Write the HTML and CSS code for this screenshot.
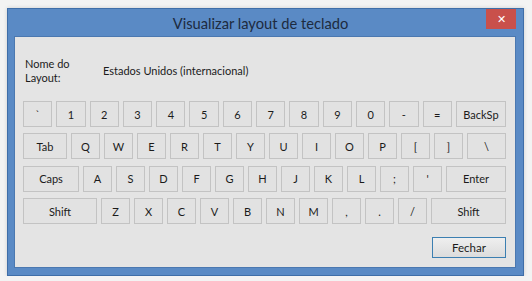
FILE: index.html
```html
<!DOCTYPE html>
<html lang="pt-BR">
<head>
  <meta charset="UTF-8" />
  <title>Visualizar layout de teclado</title>
  <link rel="stylesheet" href="styles.css">
</head>
<body>
  <div class="janela">
    <div class="titulo">
      <span class="titulo-texto">Visualizar layout de teclado</span>
      <span class="fechar-x">&#x2715;</span>
    </div>
    <div class="cliente">
      <div class="cabecalho">
        <div class="rotulo">Nome do<br>Layout:</div>
        <div class="valor">Estados Unidos (internacional)</div>
      </div>

      <div class="teclado">
        <div class="linha linha-num">
          <span class="tecla">`</span>
          <span class="tecla">1</span>
          <span class="tecla">2</span>
          <span class="tecla">3</span>
          <span class="tecla">4</span>
          <span class="tecla">5</span>
          <span class="tecla">6</span>
          <span class="tecla">7</span>
          <span class="tecla">8</span>
          <span class="tecla">9</span>
          <span class="tecla">0</span>
          <span class="tecla">-</span>
          <span class="tecla">=</span>
          <span class="tecla larga">BackSp</span>
        </div>
        <div class="linha">
          <span class="tecla tab">Tab</span>
          <span class="tecla">Q</span>
          <span class="tecla">W</span>
          <span class="tecla">E</span>
          <span class="tecla">R</span>
          <span class="tecla">T</span>
          <span class="tecla">Y</span>
          <span class="tecla">U</span>
          <span class="tecla">I</span>
          <span class="tecla">O</span>
          <span class="tecla">P</span>
          <span class="tecla">[</span>
          <span class="tecla">]</span>
          <span class="tecla larga">\</span>
        </div>
        <div class="linha">
          <span class="tecla caps">Caps</span>
          <span class="tecla">A</span>
          <span class="tecla">S</span>
          <span class="tecla">D</span>
          <span class="tecla">F</span>
          <span class="tecla">G</span>
          <span class="tecla">H</span>
          <span class="tecla">J</span>
          <span class="tecla">K</span>
          <span class="tecla">L</span>
          <span class="tecla">;</span>
          <span class="tecla">'</span>
          <span class="tecla larga">Enter</span>
        </div>
        <div class="linha">
          <span class="tecla shift">Shift</span>
          <span class="tecla">Z</span>
          <span class="tecla">X</span>
          <span class="tecla">C</span>
          <span class="tecla">V</span>
          <span class="tecla">B</span>
          <span class="tecla">N</span>
          <span class="tecla">M</span>
          <span class="tecla">,</span>
          <span class="tecla">.</span>
          <span class="tecla">/</span>
          <span class="tecla larga">Shift</span>
        </div>
      </div>

      <div class="rodape">
        <button type="button" class="botao">Fechar</button>
      </div>
    </div>
  </div>
</body>
</html>
```

FILE: styles.css
```css
body {
  margin: 0;
  padding: 8px 0 0 7px;
  background: #f3f3f3;
  font-family: Lato, "Noto Sans", sans-serif;
  font-size: 11px;
  color: #1b1b1b;
}
.janela {
  width: 515px;
  height: 266px;
  background: #5a8ac5;
  border: 1px solid #3f6ea8;
  display: flex;
  flex-direction: column;
  box-shadow: 0 0 4px rgba(0, 0, 0, 0.15);
}
.titulo {
  height: 29px;
  display: flex;
  align-items: center;
  justify-content: center;
  position: relative;
}
.titulo-texto {
  font-size: 14.7px;
  color: #1d2b40;
  margin-right: 10px;
}
.fechar-x {
  position: absolute;
  top: 0;
  right: 7px;
  width: 30px;
  height: 20px;
  background: #c9504b;
  color: #fff;
  font-size: 11px;
  display: flex;
  align-items: center;
  justify-content: center;
}
.cliente {
  margin: 0 7px 7px 6px;
  flex: 1;
  background: #e4e4e4;
  border: 1px solid #4b78b0;
  padding: 20px 9px 9px 8px;
  display: flex;
  flex-direction: column;
}
.cabecalho {
  display: flex;
  align-items: center;
  line-height: 13px;
}
.rotulo {
  width: 78px;
  padding-left: 2px;
  line-height: 13.5px;
}
.teclado {
  margin-top: 17px;
  display: flex;
  flex-direction: column;
  gap: 6.3px;
}
.linha {
  display: flex;
  gap: 4px;
}
.tecla {
  width: 29px;
  height: 26px;
  box-sizing: border-box;
  border: 1px solid #c3c3c3;
  background: #e2e2e2;
  display: flex;
  align-items: center;
  justify-content: center;
  font-size: 11px;
}
.linha-num .tecla {
  width: 29.3px;
}
.linha-num .larga,
.larga {
  flex: 1;
  width: auto;
}
.tab {
  width: 44px;
}
.caps {
  width: 56px;
}
.shift {
  width: 74px;
}
.rodape {
  margin-top: 13px;
  display: flex;
  justify-content: flex-end;
}
.botao {
  width: 74px;
  height: 21px;
  margin-right: 0;
  border: 1px solid #3c7fb1;
  background: linear-gradient(#efefef, #dcdcdc);
  font-family: Lato, "Noto Sans", sans-serif;
  font-size: 11.5px;
  color: #1b1b1b;
  padding: 0;
}
```
